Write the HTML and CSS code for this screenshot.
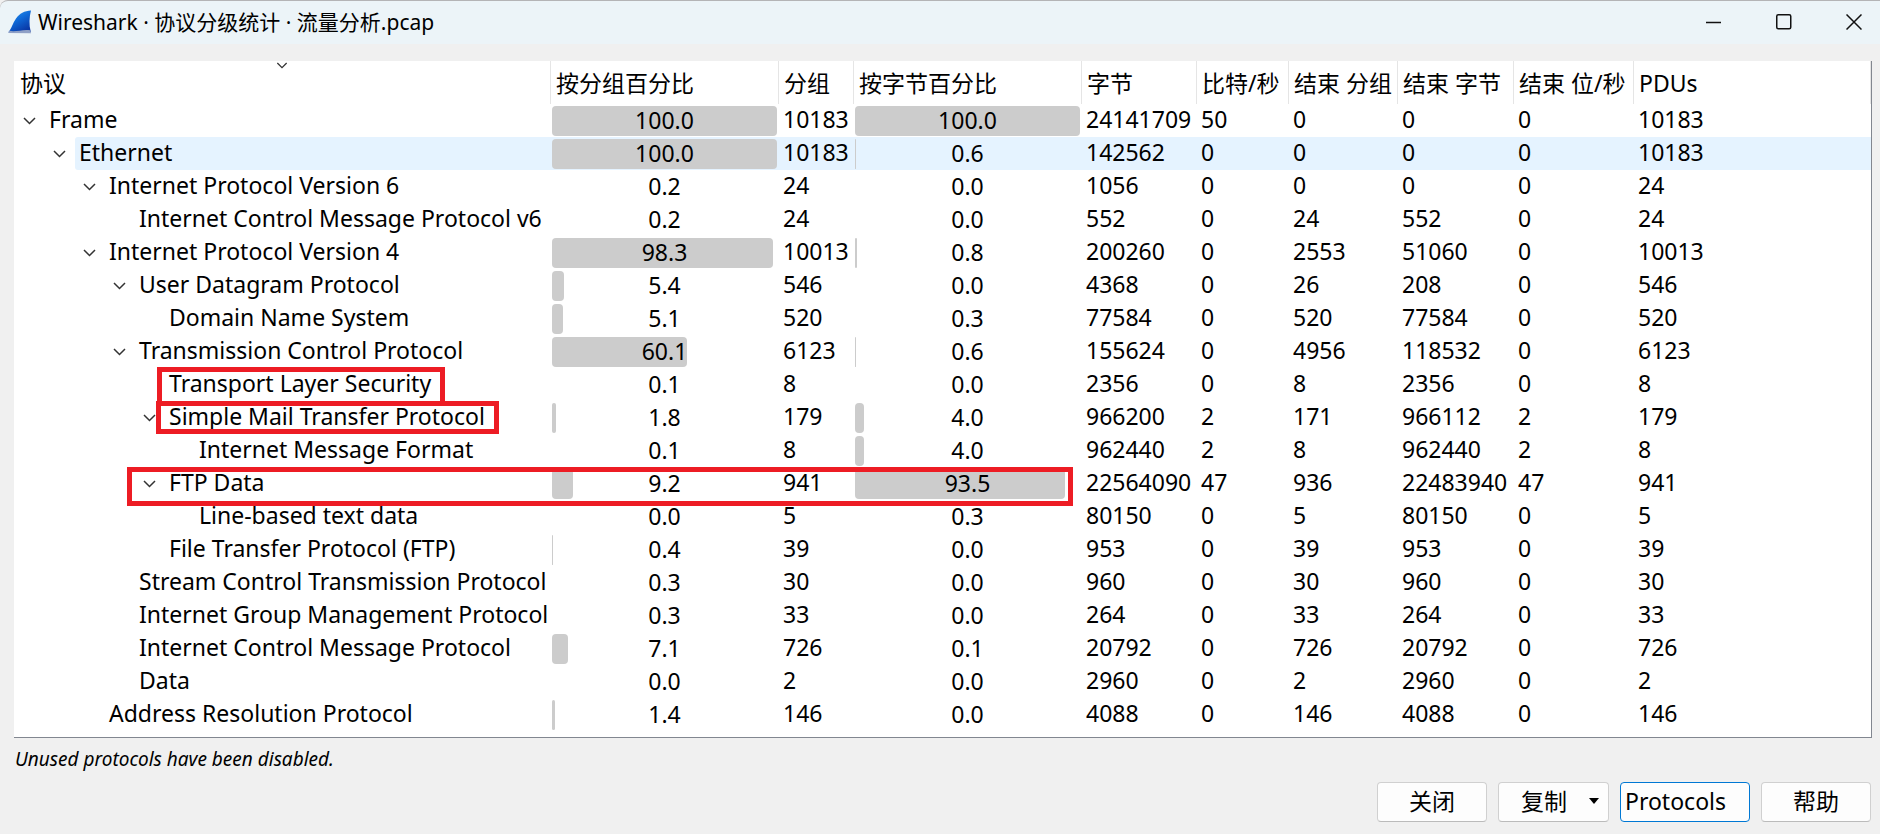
FILE: index.html
```html
<!DOCTYPE html>
<html lang="zh-CN">
<head>
    <meta charset="UTF-8">
    <meta name="viewport" content="width=device-width, initial-scale=1.0">
    <title>Wireshark · 协议分级统计 · 流量分析.pcap</title>
    <link rel="stylesheet" href="styles.css">
</head>
<body>
    <svg width="0" height="0" class="symbols">
        <symbol id="down" viewBox="0 0 13 8"><path d="M1 1l5.500 5.500L12 1" fill="none" stroke="#333" stroke-width="1.500"/></symbol>
    </svg>

    <header class="titlebar">
        <svg class="logo" viewBox="0 0 24 24">
            <defs>
                <linearGradient id="fin" x1="0" y1="0" x2="0.6" y2="1">
                    <stop offset="0" stop-color="#2f9bf0"/>
                    <stop offset="0.5" stop-color="#0f6ad8"/>
                    <stop offset="1" stop-color="#0a3aa8"/>
                </linearGradient>
            </defs>
            <path d="M0.500 22C3.500 19 4.500 13.500 8 8.500C11.500 3.500 16.500 0.800 23 0.500C21.300 7 20.800 14.500 22.800 22Z" fill="url(#fin)"/>
            <path d="M0 23L1.500 20.800C8 22.300 15 18.800 22.300 20.300L23 23.300Z" fill="#8fa0c6"/>
        </svg>
        <h1>Wireshark · 协议分级统计 · 流量分析.pcap</h1>
        <div class="caption">
            <button type="button" aria-label="最小化"><svg viewBox="0 0 16 16"><path d="M0 8.500h15"/></svg></button>
            <button type="button" aria-label="最大化"><svg viewBox="0 0 16 16"><rect x="0.750" y="0.750" width="14" height="14" rx="1.500"/></svg></button>
            <button type="button" aria-label="关闭"><svg viewBox="0 0 16 16"><path d="M0.500 0.500l15 15M15.500 0.500l-15 15"/></svg></button>
        </div>
    </header>

    <main>
        <div class="tree">
            <table>
                <colgroup>
                    <col class="c-name"><col class="c-bar"><col class="c-packets"><col class="c-bar"><col class="c-bytes">
                    <col class="c-bits"><col class="c-endp"><col class="c-endb"><col class="c-ends"><col>
                </colgroup>
                <thead>
                    <tr>
                        <th>协议<svg class="sort"><use href="#down"/></svg></th>
                        <th>按分组百分比</th><th>分组</th><th>按字节百分比</th><th>字节</th><th>比特/秒</th>
                        <th>结束 分组</th><th>结束 字节</th><th>结束 位/秒</th><th>PDUs</th>
                    </tr>
                </thead>
                <tbody>
                    <tr>
                        <td><div class="node"><button type="button" class="toggle" aria-label="折叠"><svg><use href="#down"/></svg></button><span>Frame</span></div></td>
                        <td><div class="bar"><i style="width: 100%"></i><b>100.0</b></div></td><td>10183</td>
                        <td><div class="bar"><i style="width: 100%"></i><b>100.0</b></div></td><td>24141709</td><td>50</td><td>0</td><td>0</td><td>0</td><td>10183</td>
                    </tr>
                    <tr class="hover">
                        <td><div class="node l1"><button type="button" class="toggle" aria-label="折叠"><svg><use href="#down"/></svg></button><span>Ethernet</span></div></td>
                        <td><div class="bar"><i style="width: 100%"></i><b>100.0</b></div></td><td>10183</td>
                        <td><div class="bar"><i style="width: 0.6%"></i><b>0.6</b></div></td><td>142562</td><td>0</td><td>0</td><td>0</td><td>0</td><td>10183</td>
                    </tr>
                    <tr>
                        <td><div class="node l2"><button type="button" class="toggle" aria-label="折叠"><svg><use href="#down"/></svg></button><span>Internet Protocol Version 6</span></div></td>
                        <td><div class="bar"><b>0.2</b></div></td><td>24</td>
                        <td><div class="bar"><b>0.0</b></div></td><td>1056</td><td>0</td><td>0</td><td>0</td><td>0</td><td>24</td>
                    </tr>
                    <tr>
                        <td><div class="node leaf l3"><span>Internet Control Message Protocol v6</span></div></td>
                        <td><div class="bar"><b>0.2</b></div></td><td>24</td>
                        <td><div class="bar"><b>0.0</b></div></td><td>552</td><td>0</td><td>24</td><td>552</td><td>0</td><td>24</td>
                    </tr>
                    <tr>
                        <td><div class="node l2"><button type="button" class="toggle" aria-label="折叠"><svg><use href="#down"/></svg></button><span>Internet Protocol Version 4</span></div></td>
                        <td><div class="bar"><i style="width: 98.3%"></i><b>98.3</b></div></td><td>10013</td>
                        <td><div class="bar"><i style="width: 0.8%"></i><b>0.8</b></div></td><td>200260</td><td>0</td><td>2553</td><td>51060</td><td>0</td><td>10013</td>
                    </tr>
                    <tr>
                        <td><div class="node l3"><button type="button" class="toggle" aria-label="折叠"><svg><use href="#down"/></svg></button><span>User Datagram Protocol</span></div></td>
                        <td><div class="bar"><i style="width: 5.4%"></i><b>5.4</b></div></td><td>546</td>
                        <td><div class="bar"><b>0.0</b></div></td><td>4368</td><td>0</td><td>26</td><td>208</td><td>0</td><td>546</td>
                    </tr>
                    <tr>
                        <td><div class="node leaf l4"><span>Domain Name System</span></div></td>
                        <td><div class="bar"><i style="width: 5.1%"></i><b>5.1</b></div></td><td>520</td>
                        <td><div class="bar"><b>0.3</b></div></td><td>77584</td><td>0</td><td>520</td><td>77584</td><td>0</td><td>520</td>
                    </tr>
                    <tr>
                        <td><div class="node l3"><button type="button" class="toggle" aria-label="折叠"><svg><use href="#down"/></svg></button><span>Transmission Control Protocol</span></div></td>
                        <td><div class="bar"><i style="width: 60.1%"></i><b>60.1</b></div></td><td>6123</td>
                        <td><div class="bar"><i style="width: 0.6%"></i><b>0.6</b></div></td><td>155624</td><td>0</td><td>4956</td><td>118532</td><td>0</td><td>6123</td>
                    </tr>
                    <tr>
                        <td><div class="node leaf l4"><span>Transport Layer Security</span></div><div class="mark mark-tls"></div></td>
                        <td><div class="bar"><b>0.1</b></div></td><td>8</td>
                        <td><div class="bar"><b>0.0</b></div></td><td>2356</td><td>0</td><td>8</td><td>2356</td><td>0</td><td>8</td>
                    </tr>
                    <tr>
                        <td><div class="node l4"><button type="button" class="toggle" aria-label="折叠"><svg><use href="#down"/></svg></button><span>Simple Mail Transfer Protocol</span></div><div class="mark mark-smtp"></div></td>
                        <td><div class="bar"><i style="width: 1.8%"></i><b>1.8</b></div></td><td>179</td>
                        <td><div class="bar"><i style="width: 4%"></i><b>4.0</b></div></td><td>966200</td><td>2</td><td>171</td><td>966112</td><td>2</td><td>179</td>
                    </tr>
                    <tr>
                        <td><div class="node leaf l5"><span>Internet Message Format</span></div></td>
                        <td><div class="bar"><b>0.1</b></div></td><td>8</td>
                        <td><div class="bar"><i style="width: 4%"></i><b>4.0</b></div></td><td>962440</td><td>2</td><td>8</td><td>962440</td><td>2</td><td>8</td>
                    </tr>
                    <tr>
                        <td><div class="node l4"><button type="button" class="toggle" aria-label="折叠"><svg><use href="#down"/></svg></button><span>FTP Data</span></div><div class="mark mark-ftp"></div></td>
                        <td><div class="bar"><i style="width: 9.2%"></i><b>9.2</b></div></td><td>941</td>
                        <td><div class="bar"><i style="width: 93.5%"></i><b>93.5</b></div></td><td>22564090</td><td>47</td><td>936</td><td>22483940</td><td>47</td><td>941</td>
                    </tr>
                    <tr>
                        <td><div class="node leaf l5"><span>Line-based text data</span></div></td>
                        <td><div class="bar"><b>0.0</b></div></td><td>5</td>
                        <td><div class="bar"><b>0.3</b></div></td><td>80150</td><td>0</td><td>5</td><td>80150</td><td>0</td><td>5</td>
                    </tr>
                    <tr>
                        <td><div class="node leaf l4"><span>File Transfer Protocol (FTP)</span></div></td>
                        <td><div class="bar"><i style="width: 0.4%"></i><b>0.4</b></div></td><td>39</td>
                        <td><div class="bar"><b>0.0</b></div></td><td>953</td><td>0</td><td>39</td><td>953</td><td>0</td><td>39</td>
                    </tr>
                    <tr>
                        <td><div class="node leaf l3"><span>Stream Control Transmission Protocol</span></div></td>
                        <td><div class="bar"><b>0.3</b></div></td><td>30</td>
                        <td><div class="bar"><b>0.0</b></div></td><td>960</td><td>0</td><td>30</td><td>960</td><td>0</td><td>30</td>
                    </tr>
                    <tr>
                        <td><div class="node leaf l3"><span>Internet Group Management Protocol</span></div></td>
                        <td><div class="bar"><b>0.3</b></div></td><td>33</td>
                        <td><div class="bar"><b>0.0</b></div></td><td>264</td><td>0</td><td>33</td><td>264</td><td>0</td><td>33</td>
                    </tr>
                    <tr>
                        <td><div class="node leaf l3"><span>Internet Control Message Protocol</span></div></td>
                        <td><div class="bar"><i style="width: 7.1%"></i><b>7.1</b></div></td><td>726</td>
                        <td><div class="bar"><b>0.1</b></div></td><td>20792</td><td>0</td><td>726</td><td>20792</td><td>0</td><td>726</td>
                    </tr>
                    <tr>
                        <td><div class="node leaf l3"><span>Data</span></div></td>
                        <td><div class="bar"><b>0.0</b></div></td><td>2</td>
                        <td><div class="bar"><b>0.0</b></div></td><td>2960</td><td>0</td><td>2</td><td>2960</td><td>0</td><td>2</td>
                    </tr>
                    <tr>
                        <td><div class="node leaf l2"><span>Address Resolution Protocol</span></div></td>
                        <td><div class="bar"><i style="width: 1.4%"></i><b>1.4</b></div></td><td>146</td>
                        <td><div class="bar"><b>0.0</b></div></td><td>4088</td><td>0</td><td>146</td><td>4088</td><td>0</td><td>146</td>
                    </tr>
                </tbody>
            </table>
        </div>
        <p class="hint">Unused protocols have been disabled.</p>
        <div class="buttons">
            <button type="button" class="btn">关闭</button>
            <button type="button" class="btn btn-menu">复制<svg viewBox="0 0 10 6"><path d="M0 0h10L5 6z"/></svg></button>
            <button type="button" class="btn btn-protocols">Protocols</button>
            <button type="button" class="btn">帮助</button>
        </div>
    </main>
</body>
</html>
```
FILE: styles.css
```css
* {
    box-sizing: border-box;
}
body {
    margin: 0;
    background-color: #f0f0f0;
    color: #000;
    font-family: "Noto Sans", "Noto Sans CJK SC", sans-serif;
    font-size: 23px;
    line-height: 30px;
}
button {
    font: inherit;
    color: inherit;
    padding: 0;
    border: none;
    background: none;
}
.symbols {
    position: absolute;
}

/* title bar */
.titlebar {
    display: flex;
    align-items: center;
    height: 44px;
    padding: 0 1px 2px 8px;
    background-color: #ecf4f8;
    border-top: 1px solid #b4b4b6;
    border-top-left-radius: 8px;
}
.logo {
    width: 24px;
    height: 24px;
}
.titlebar h1 {
    flex: 1;
    margin: 0 0 0 6px;
    font-size: 21px;
    font-weight: normal;
}
.caption {
    display: flex;
}
.caption button {
    display: flex;
    justify-content: center;
    align-items: center;
    width: 70px;
    height: 40px;
}
.caption button:last-child {
    width: 50px;
    margin-left: 10px;
}
.caption svg {
    width: 16px;
    height: 16px;
    fill: none;
    stroke: #111;
    stroke-width: 1.5;
}

main {
    padding: 17px 8px 12px 14px;
}

/* protocol tree */
.tree {
    background-color: #fff;
    border-right: 1px solid #828790;
    border-bottom: 1px solid #828790;
    padding-bottom: 6px;
}
table {
    width: 100%;
    table-layout: fixed;
    border-collapse: separate;
    border-spacing: 0;
}
.c-name { width: 537px; }
.c-bar { width: 228px; }
.c-packets { width: 75px; }
.c-bytes { width: 115px; }
.c-bits { width: 92px; }
.c-endp { width: 109px; }
.c-endb { width: 116px; }
.c-ends { width: 120px; }
th {
    position: relative;
    height: 43px;
    padding: 1px 0 0 5px;
    border-right: 1px solid #e5e5e5;
    font-weight: normal;
    text-align: left;
    white-space: nowrap;
}
th:first-child {
    padding-left: 6px;
}
.sort {
    position: absolute;
    top: 1px;
    left: 50%;
    width: 11px;
    height: 7px;
    transform: translateX(-50%);
}
td {
    position: relative;
    height: 33px;
    padding: 0 0 0 4px;
    vertical-align: top;
    white-space: nowrap;
}
td:first-child {
    padding: 0;
}
.hover td {
    background-color: #e5f3ff;
}
.hover td:first-child {
    background: none;
}
.hover .node span {
    background-color: #e5f3ff;
    border-radius: 3px 0 0 3px;
}
.node {
    display: flex;
    height: 33px;
}
.node span {
    flex: 1;
    padding-left: 4px;
}
.toggle {
    display: flex;
    align-items: center;
    justify-content: center;
    width: 31px;
}
.toggle svg {
    width: 13px;
    height: 8px;
}
.leaf { padding-left: 31px; }
.l1 { margin-left: 30px; }
.l2 { margin-left: 60px; }
.l3 { margin-left: 90px; }
.l4 { margin-left: 120px; }
.l5 { margin-left: 150px; }

/* percentage cells */
td:nth-child(2),
td:nth-child(4) {
    padding: 2px 2px 0 1px;
}
.bar {
    position: relative;
    height: 30px;
    line-height: 28px;
    text-align: center;
}
.bar i {
    position: absolute;
    top: 0;
    left: 0;
    height: 30px;
    min-width: 1px;
    background-color: #ccc;
    border-radius: 4px;
}
.bar b {
    position: relative;
    font-weight: normal;
}

/* red frames over the rows of interest */
.mark {
    position: absolute;
    z-index: 1;
    border: 5px solid #ed1c24;
    pointer-events: none;
}
.mark-tls {
    top: -1px;
    left: 143px;
    width: 288px;
    height: 39px;
}
.mark-smtp {
    top: 0;
    left: 142px;
    width: 343px;
    height: 33px;
}
.mark-ftp {
    top: 0;
    left: 113px;
    width: 946px;
    height: 39px;
}

.hint {
    margin: 6px 0 0 1px;
    font-size: 19px;
    font-style: italic;
}

.buttons {
    display: flex;
    justify-content: flex-end;
    gap: 11px;
    margin: 8px 1px 0 0;
}
.btn {
    width: 110px;
    height: 40px;
    padding-bottom: 3px;
    background-color: #fdfdfd;
    border: 1px solid #d0d0d0;
    border-bottom-color: #bbb;
    border-radius: 4px;
}
.btn-menu {
    display: flex;
    align-items: center;
    justify-content: flex-end;
    gap: 22px;
    width: 111px;
    padding-right: 9px;
}
.btn-menu svg {
    width: 10px;
    height: 6px;
}
.btn-protocols {
    width: 130px;
    padding-left: 4px;
    border-color: #0078d4;
    text-align: left;
}
```
